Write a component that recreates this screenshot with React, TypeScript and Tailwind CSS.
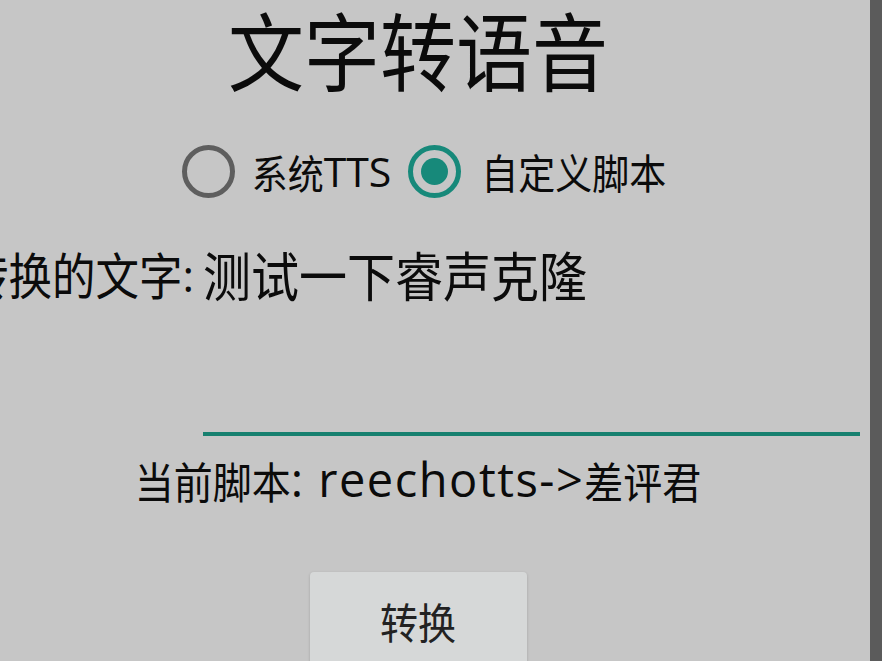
const cjk = { fontFamily: '"Noto Sans CJK SC", sans-serif' };
const latin = { fontFamily: '"Open Sans", "Noto Sans CJK SC", sans-serif' };

// CJK glyphs in the reference are drawn a bit taller than wide
const Tall = ({ children, className = "" }: { children: React.ReactNode; className?: string }) => (
  <span className={`inline-block scale-y-[1.12] ${className}`} style={cjk}>
    {children}
  </span>
);

const Radio = ({ checked }: { checked: boolean }) => (
  <span
    className={`flex h-[53px] w-[53px] shrink-0 items-center justify-center rounded-full border-[5px] ${
      checked ? "border-[#17897a]" : "border-[#5e5e5e]"
    }`}
  >
    {checked && <span className="h-[27px] w-[27px] rounded-full bg-[#17897a]" />}
  </span>
);

export default function App() {
  return (
    <div className="flex h-[661px] w-[882px] overflow-hidden bg-[#c6c6c6] text-[#0b0b0b]" style={cjk}>
      <div className="flex w-[870px] shrink-0 flex-col items-center pr-[34px]">
        <h1 className="mt-[3px] text-[76px] font-normal leading-[1.2]">
          <Tall>文字转语音</Tall>
        </h1>

        <div className="ml-[12px] mt-[51px] flex items-center">
          <label className="flex items-center gap-[17px]">
            <Radio checked={false} />
            <span className="flex items-baseline text-[36px] leading-[1.15]">
              <Tall>系统</Tall>
              <span className="text-[41px]" style={latin}>TTS</span>
            </span>
          </label>
          <label className="ml-[17px] flex items-center gap-[20px]">
            <Radio checked={true} />
            <span className="text-[37px] leading-[1.15]">
              <Tall>自定义脚本</Tall>
            </span>
          </label>
        </div>

        <div className="mr-[-24px] mt-[45px] flex self-stretch justify-end">
          <span className="flex shrink-0 items-baseline whitespace-nowrap pr-[9px] text-[43.5px] leading-[1.3]">
            <Tall className="pt-[3px] scale-y-[1.15]">要转换的文字</Tall>
            <span className="text-[44px]" style={latin}>:</span>
          </span>
          <div className="h-[193px] w-[657px] shrink-0 border-b-4 border-[#17806f] text-[48px] leading-[1.3]">
            <Tall>测试一下睿声克隆</Tall>
          </div>
        </div>

        <p className="mt-[15px] flex items-baseline whitespace-nowrap text-[39px] leading-[1.2]">
          <Tall>当前脚本</Tall>
          <span className="text-[47px] tracking-[1.5px]" style={latin}>: reechotts-&gt;</span>
          <Tall>差评君</Tall>
        </p>

        <button className="mt-[64px] flex h-[100px] w-[217px] shrink-0 items-center justify-center rounded-[4px] bg-[#d6d8d8] pb-[2px] text-[38px] leading-[1.2] text-[#222] shadow-[0_1px_3px_rgba(0,0,0,0.18)]">
          <Tall className="scale-y-[1.04]">转换</Tall>
        </button>
      </div>
      <div className="h-full flex-1 bg-[#5b5b5b]" />
    </div>
  );
}
